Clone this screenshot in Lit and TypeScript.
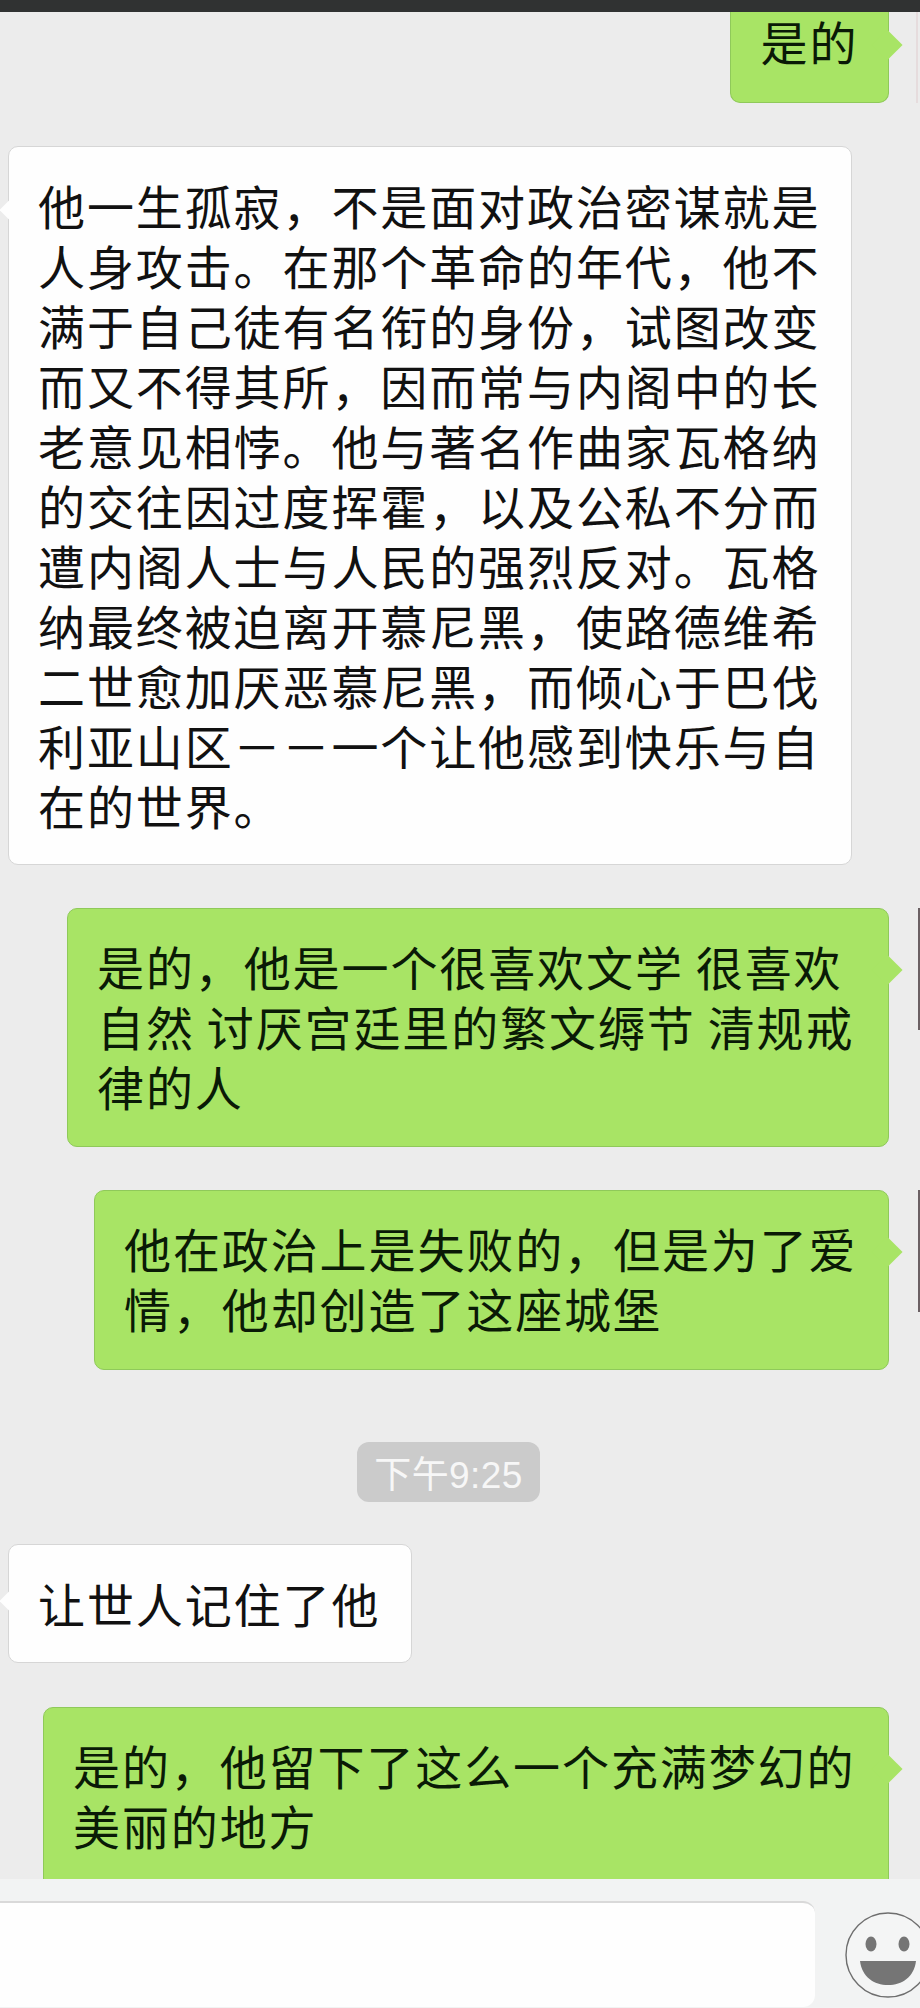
import { LitElement, html, css } from "lit";
import { customElement } from "lit/decorators.js";

@customElement("app-root")
export class AppRoot extends LitElement {
  static styles = css`
    :host { display: block; width: 920px; height: 2008px; overflow: hidden; background: #ececec;
      font-family: "Liberation Sans", "Noto Sans CJK SC", sans-serif; color: #111; }
    .page { display: flex; flex-direction: column; height: 2008px; }
    .status { height: 12px; flex: none; background: #303232; position: relative; z-index: 1; }
    .chat { flex: 1; min-height: 0; display: flex; flex-direction: column; }
    .row { display: flex; flex: none; position: relative; }
    .row.me { justify-content: flex-end; padding-right: 31px; }
    .row.them { justify-content: flex-start; padding-left: 8px; }
    .bubble { position: relative; box-sizing: border-box; border-radius: 10px; font-size: 47px; line-height: 60px; white-space: nowrap; letter-spacing: 1.9px; }
    .me .bubble { background: #a8e465; border: 1px solid #8fc95a; color: #0a1a06; padding: 0 29px; }
    .them .bubble { background: #fefefe; border: 1px solid #d6d6d6; padding: 0 29px; }
    .tail { position: absolute; width: 22px; height: 22px; transform: rotate(45deg); }
    .me .tail { right: -10px; top: 50px; background: #a8e465; }
    .them .tail { left: -5px; top: 52px; background: #fefefe; }
    .b1 { width: 159px; height: 91px; padding: 4px 0 0 !important; display: flex; justify-content: center; border-top: 0 !important; border-radius: 0 0 10px 10px; line-height: 58px; }
    .b1 .tail { top: 22px; }
    .b2 { width: 844px; height: 719px; padding-top: 32px !important; }
    .b3 { width: 822px; height: 239px; padding-top: 31px !important; word-spacing: -3px; }
    .b4 { width: 795px; height: 180px; padding-top: 31px !important; }
    .b5 { width: 404px; height: 119px; padding-top: 32px !important; }
    .b5 .tail { top: 45px; }
    .b6 { width: 846px; height: 190px; padding-top: 31px !important; border-radius: 10px 10px 0 0 !important; }
    .time { align-self: flex-start; width: 183px; height: 60px; box-sizing: border-box; flex: none; margin: 72px 0 0 357px;
      background: #cbcbcb; border-radius: 12px; color: #f7f7f7; display: flex; align-items: center; justify-content: center; font-size: 37px; letter-spacing: 0.4px; white-space: nowrap; }
    .footer { flex: none; height: 129px; background: #f2f3f3; display: flex; align-items: flex-start; position: relative; z-index: 1; }
    .input { width: 815px; height: 106px; flex: none; margin-top: 22px; background: #fefefe; border-top: 2px solid #d9d9d9; border-radius: 0 12px 12px 0; box-sizing: border-box; }
    .emoji { width: 90px; height: 88px; margin: 32px 0 0 28px; flex: none; }
    .edge { position: absolute; right: 0; top: 0; width: 2px; }
    .edge.dark { height: 122px; background: #6b6063; }
    .edge.pale { height: 91px; background: #e6dcdd; right: 2px; }
  `;

  render() {
    return html`<div class="page">
      <div class="status"></div>
      <div class="chat">
        <div class="row me"><div class="bubble b1"><span class="tail"></span>是的</div><span class="edge pale"></span></div>
        <div class="row them" style="margin-top:43px"><div class="bubble b2"><span class="tail"></span>他一生孤寂，不是面对政治密谋就是<br>人身攻击。在那个革命的年代，他不<br>满于自己徒有名衔的身份，试图改变<br>而又不得其所，因而常与内阁中的长<br>老意见相悖。他与著名作曲家瓦格纳<br>的交往因过度挥霍，以及公私不分而<br>遭内阁人士与人民的强烈反对。瓦格<br>纳最终被迫离开慕尼黑，使路德维希<br>二世愈加厌恶慕尼黑，而倾心于巴伐<br>利亚山区－－一个让他感到快乐与自<br>在的世界。</div></div>
        <div class="row me" style="margin-top:43px"><div class="bubble b3"><span class="tail"></span>是的，他是一个很喜欢文学 很喜欢<br>自然 讨厌宫廷里的繁文缛节 清规戒<br>律的人</div><span class="edge dark"></span></div>
        <div class="row me" style="margin-top:43px"><div class="bubble b4"><span class="tail"></span>他在政治上是失败的，但是为了爱<br>情，他却创造了这座城堡</div><span class="edge dark"></span></div>
        <div class="time">下午9:25</div>
        <div class="row them" style="margin-top:42px"><div class="bubble b5"><span class="tail"></span>让世人记住了他</div></div>
        <div class="row me" style="margin-top:44px"><div class="bubble b6"><span class="tail"></span>是的，他留下了这么一个充满梦幻的<br>美丽的地方</div></div>
      </div>
      <div class="footer">
        <div class="input"></div>
        <svg class="emoji" viewBox="0 0 90 88">
          <circle cx="45" cy="44" r="42" fill="#f4f5f5" stroke="#6e6e6e" stroke-width="1.4"/>
          <ellipse cx="28" cy="33" rx="5.5" ry="7.5" fill="#757575"/>
          <ellipse cx="61" cy="33" rx="5.5" ry="7.5" fill="#757575"/>
          <path d="M17 50 H73 C71 66 59 74 45 74 C31 74 19 66 17 50 Z" fill="#757575"/>
        </svg>
      </div>
    </div>`;
  }
}
